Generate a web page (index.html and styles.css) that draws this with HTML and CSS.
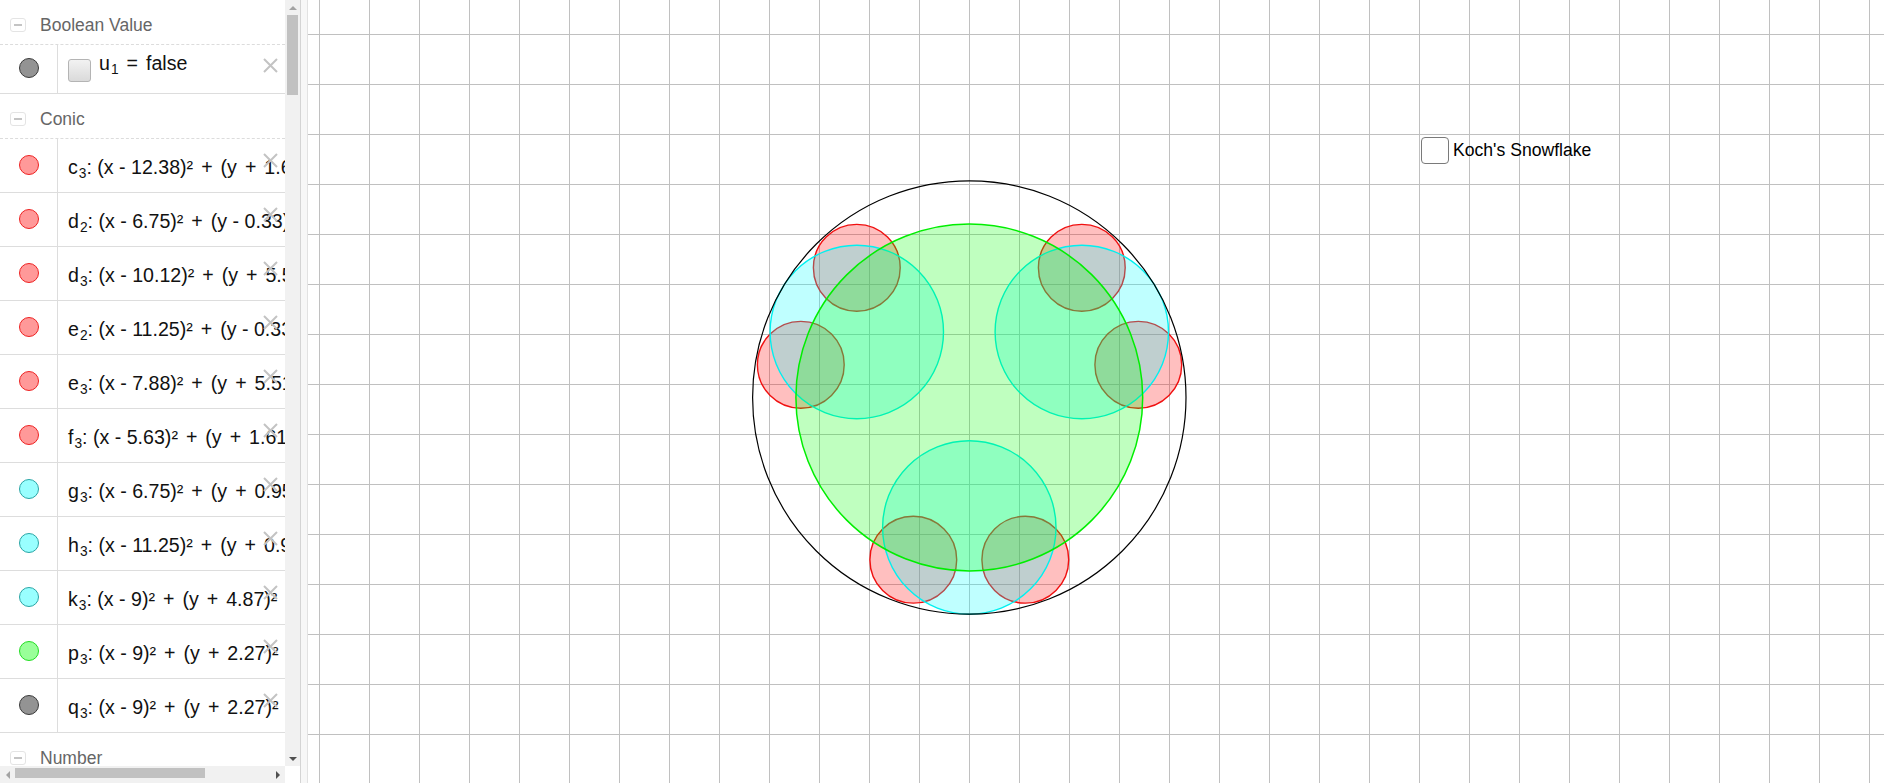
FILE: index.html
```html
<!DOCTYPE html>
<html lang="en">
<head>
<meta charset="utf-8">
<title>GeoGebra</title>
<link rel="stylesheet" href="styles.css">
</head>
<body>
<div class="app">
  <aside class="algebra">
    <div class="av-content">
      <div class="group-head"><span class="toggle"></span><span class="group-title">Boolean Value</span></div>
      <div class="item item-bool">
        <div class="marker"><span class="dot dot-gray"></span></div>
        <div class="expr expr-bool"><span class="cb"></span><span class="math">u<sub>1</sub> <span class="op">=</span> false</span></div>
        <svg class="del del-bool" width="17" height="17" viewBox="0 0 17 17"><path d="M2 2L15 15M15 2L2 15"/></svg>
      </div>
      <div class="group-head"><span class="toggle"></span><span class="group-title">Conic</span></div>
      <div class="item">
        <div class="marker"><span class="dot dot-red"></span></div>
        <div class="expr"><span class="math">c<sub>3</sub>: (x - 12.38)² <span class="op">+</span> (y <span class="op">+</span> 1.61)² <span class="op">=</span> 0.75</span></div>
        <svg class="del" width="17" height="17" viewBox="0 0 17 17"><path d="M2 2L15 15M15 2L2 15"/></svg>
      </div>
      <div class="item">
        <div class="marker"><span class="dot dot-red"></span></div>
        <div class="expr"><span class="math">d<sub>2</sub>: (x - 6.75)² <span class="op">+</span> (y - 0.33)² <span class="op">=</span> 0.75</span></div>
        <svg class="del" width="17" height="17" viewBox="0 0 17 17"><path d="M2 2L15 15M15 2L2 15"/></svg>
      </div>
      <div class="item">
        <div class="marker"><span class="dot dot-red"></span></div>
        <div class="expr"><span class="math">d<sub>3</sub>: (x - 10.12)² <span class="op">+</span> (y <span class="op">+</span> 5.51)² <span class="op">=</span> 0.75</span></div>
        <svg class="del" width="17" height="17" viewBox="0 0 17 17"><path d="M2 2L15 15M15 2L2 15"/></svg>
      </div>
      <div class="item">
        <div class="marker"><span class="dot dot-red"></span></div>
        <div class="expr"><span class="math">e<sub>2</sub>: (x - 11.25)² <span class="op">+</span> (y - 0.33)² <span class="op">=</span> 0.75</span></div>
        <svg class="del" width="17" height="17" viewBox="0 0 17 17"><path d="M2 2L15 15M15 2L2 15"/></svg>
      </div>
      <div class="item">
        <div class="marker"><span class="dot dot-red"></span></div>
        <div class="expr"><span class="math">e<sub>3</sub>: (x - 7.88)² <span class="op">+</span> (y <span class="op">+</span> 5.51)² <span class="op">=</span> 0.75</span></div>
        <svg class="del" width="17" height="17" viewBox="0 0 17 17"><path d="M2 2L15 15M15 2L2 15"/></svg>
      </div>
      <div class="item">
        <div class="marker"><span class="dot dot-red"></span></div>
        <div class="expr"><span class="math">f<sub>3</sub>: (x - 5.63)² <span class="op">+</span> (y <span class="op">+</span> 1.61)² <span class="op">=</span> 0.75</span></div>
        <svg class="del" width="17" height="17" viewBox="0 0 17 17"><path d="M2 2L15 15M15 2L2 15"/></svg>
      </div>
      <div class="item">
        <div class="marker"><span class="dot dot-cyan"></span></div>
        <div class="expr"><span class="math">g<sub>3</sub>: (x - 6.75)² <span class="op">+</span> (y <span class="op">+</span> 0.95)² <span class="op">=</span> 3</span></div>
        <svg class="del" width="17" height="17" viewBox="0 0 17 17"><path d="M2 2L15 15M15 2L2 15"/></svg>
      </div>
      <div class="item">
        <div class="marker"><span class="dot dot-cyan"></span></div>
        <div class="expr"><span class="math">h<sub>3</sub>: (x - 11.25)² <span class="op">+</span> (y <span class="op">+</span> 0.95)² <span class="op">=</span> 3</span></div>
        <svg class="del" width="17" height="17" viewBox="0 0 17 17"><path d="M2 2L15 15M15 2L2 15"/></svg>
      </div>
      <div class="item">
        <div class="marker"><span class="dot dot-cyan"></span></div>
        <div class="expr"><span class="math">k<sub>3</sub>: (x - 9)² <span class="op">+</span> (y <span class="op">+</span> 4.87)² <span class="op">=</span> 3</span></div>
        <svg class="del" width="17" height="17" viewBox="0 0 17 17"><path d="M2 2L15 15M15 2L2 15"/></svg>
      </div>
      <div class="item">
        <div class="marker"><span class="dot dot-green"></span></div>
        <div class="expr"><span class="math">p<sub>3</sub>: (x - 9)² <span class="op">+</span> (y <span class="op">+</span> 2.27)² <span class="op">=</span> 12.02</span></div>
        <svg class="del" width="17" height="17" viewBox="0 0 17 17"><path d="M2 2L15 15M15 2L2 15"/></svg>
      </div>
      <div class="item">
        <div class="marker"><span class="dot dot-gray"></span></div>
        <div class="expr"><span class="math">q<sub>3</sub>: (x - 9)² <span class="op">+</span> (y <span class="op">+</span> 2.27)² <span class="op">=</span> 18.78</span></div>
        <svg class="del" width="17" height="17" viewBox="0 0 17 17"><path d="M2 2L15 15M15 2L2 15"/></svg>
      </div>
      <div class="group-head"><span class="toggle"></span><span class="group-title">Number</span></div>
    </div>
    <div class="vscroll">
      <div class="arrow-box"><span class="tri tri-up"></span></div>
      <div class="vthumb"></div>
      <div class="spacer"></div>
      <div class="arrow-box"><span class="tri tri-down"></span></div>
    </div>
    <div class="hscroll">
      <div class="arrow-box"><span class="tri tri-left"></span></div>
      <div class="hthumb"></div>
      <div class="spacer"></div>
      <div class="arrow-box"><span class="tri tri-right"></span></div>
    </div>
    <div class="corner"></div>
  </aside>
  <div class="divider"></div>
  <main class="graphics">
    <svg class="canvas" width="1576" height="783" viewBox="0 0 1576 783">
      <g class="c-red">
        <circle cx="830.3" cy="364.8" r="43.4"/>
        <circle cx="548.8" cy="267.8" r="43.4"/>
        <circle cx="717.3" cy="559.7" r="43.4"/>
        <circle cx="773.8" cy="267.8" r="43.4"/>
        <circle cx="605.3" cy="559.7" r="43.4"/>
        <circle cx="492.8" cy="364.8" r="43.4"/>
      </g>
      <g class="c-cyan">
        <circle cx="548.8" cy="332" r="86.7"/>
        <circle cx="773.8" cy="332" r="86.7"/>
        <circle cx="661.3" cy="527.5" r="86.7"/>
      </g>
      <circle class="c-green" cx="661.3" cy="397.5" r="173.4"/>
      <circle class="c-black" cx="661.3" cy="397.5" r="216.7"/>
    </svg>
    <label class="koch"><span class="koch-box"></span><span class="koch-text">Koch's Snowflake</span></label>
  </main>
</div>
</body>
</html>
```
FILE: styles.css
```css
* { box-sizing: border-box; }
html, body { margin: 0; padding: 0; }
body {
  width: 1884px;
  height: 783px;
  overflow: hidden;
  background: #fff;
  font-family: "Liberation Sans", Arial, sans-serif;
}
.app { display: flex; height: 783px; }

/* Algebra view */
.algebra {
  width: 300px;
  flex: none;
  display: grid;
  grid-template-columns: 285px 15px;
  grid-template-rows: 766px 17px;
}
.av-content { overflow: hidden; position: relative; }

.group-head {
  height: 45px;
  display: flex;
  align-items: center;
  padding-top: 6px;
  border-bottom: 1px dashed #dcdcdc;
}
.toggle {
  position: relative;
  margin-left: 10px;
  width: 16px;
  height: 14px;
  border: 1px solid #e4e4e4;
  border-radius: 3px;
}
.toggle::after {
  content: "";
  position: absolute;
  left: 3px;
  top: 5px;
  width: 8px;
  height: 2px;
  background: #c4c4c4;
}
.group-title {
  margin-left: 14px;
  font-size: 17.5px;
  color: #666;
}

.item {
  position: relative;
  display: flex;
  height: 54px;
  border-bottom: 1px solid #ddd;
}
.item-bool { height: 49px; }
.marker {
  width: 58px;
  flex: none;
  border-right: 1px solid #ddd;
  display: flex;
  align-items: center;
  justify-content: center;
  padding-bottom: 2px;
}
.dot {
  width: 20px;
  height: 20px;
  border-radius: 50%;
  border: 1px solid;
}
.dot-gray { background: #939393; border-color: #3a3a3a; }
.dot-red { background: #ff9999; border-color: #ee2222; }
.dot-cyan { background: #99ffff; border-color: #2aa5a5; }
.dot-green { background: #99ff99; border-color: #22dd22; }

.expr {
  flex: 1;
  min-width: 0;
  display: flex;
  align-items: center;
  padding-left: 10px;
  padding-top: 3px;
  white-space: nowrap;
  overflow: hidden;
  font-size: 19.6px;
  line-height: 24px;
  color: #111;
}
.expr-bool { align-items: flex-start; padding-top: 0; }
.cb {
  flex: none;
  width: 23px;
  height: 23px;
  margin-top: 14px;
  margin-right: 8px;
  border: 1px solid #b4b4b4;
  border-radius: 3px;
  background: linear-gradient(#f2f2f2, #dadada);
}
.expr-bool .math { margin-top: 6px; }
.math sub {
  font-size: 0.7em;
  line-height: 0;
  vertical-align: -0.3em;
  margin-left: 1px;
}
.op { margin: 0 0.13em; }

.del {
  position: absolute;
  right: 6px;
  top: 13px;
}
.del-bool { top: 12px; }
.del path {
  fill: none;
  stroke: #c3c3c3;
  stroke-width: 2;
}

/* Scrollbars */
.vscroll {
  background: #f1f1f1;
  display: flex;
  flex-direction: column;
}
.arrow-box {
  width: 15px;
  height: 15px;
  flex: none;
  display: flex;
  align-items: center;
  justify-content: center;
}
.vthumb {
  height: 80px;
  margin: 0 2px;
  background: #c1c1c1;
}
.spacer { flex: 1; }
.hscroll {
  background: #f1f1f1;
  display: flex;
  align-items: flex-start;
}
.hscroll .arrow-box { height: 17px; }
.hthumb {
  width: 190px;
  height: 10px;
  margin-top: 2px;
  background: #c1c1c1;
}
.corner { background: #fff; }
.tri { width: 0; height: 0; }
.tri-up { border-left: 4px solid transparent; border-right: 4px solid transparent; border-bottom: 4px solid #a3a3a3; }
.tri-down { border-left: 4px solid transparent; border-right: 4px solid transparent; border-top: 4px solid #505050; }
.tri-left { border-top: 4px solid transparent; border-bottom: 4px solid transparent; border-right: 4px solid #a3a3a3; }
.tri-right { border-top: 4px solid transparent; border-bottom: 4px solid transparent; border-left: 4px solid #505050; }

.divider {
  width: 8px;
  flex: none;
  background: #f7f7f7;
  border-left: 1px solid #d4d4d4;
  border-right: 1px solid #e2e2e2;
}

/* Graphics view */
.graphics {
  position: relative;
  flex: 1;
  height: 783px;
  overflow: hidden;
  background-color: #fff;
  background-image:
    linear-gradient(to right, #c0c0c0 1px, transparent 1px),
    linear-gradient(to bottom, #c0c0c0 1px, transparent 1px);
  background-size: 50px 50px;
  background-position: 11px 34px;
}
.canvas {
  position: absolute;
  left: 0;
  top: 0;
}
.c-red circle { fill: rgba(255, 0, 0, 0.25); stroke: #f01010; stroke-width: 1.4; }
.c-cyan circle { fill: rgba(0, 255, 255, 0.25); stroke: #00f0f0; stroke-width: 1.4; }
.c-green { fill: rgba(0, 255, 0, 0.25); stroke: #00ee00; stroke-width: 1.5; }
.c-black { fill: none; stroke: #000; stroke-width: 1.2; }

.koch {
  position: absolute;
  left: 1113px;
  top: 137px;
  display: flex;
  align-items: center;
  font-family: "Liberation Sans", Arial, sans-serif;
  font-size: 17.6px;
  color: #000;
}
.koch-box {
  width: 28px;
  height: 27px;
  border: 1px solid #7a7a7a;
  border-radius: 4px;
  background: #fff;
  margin-right: 4px;
}
```
